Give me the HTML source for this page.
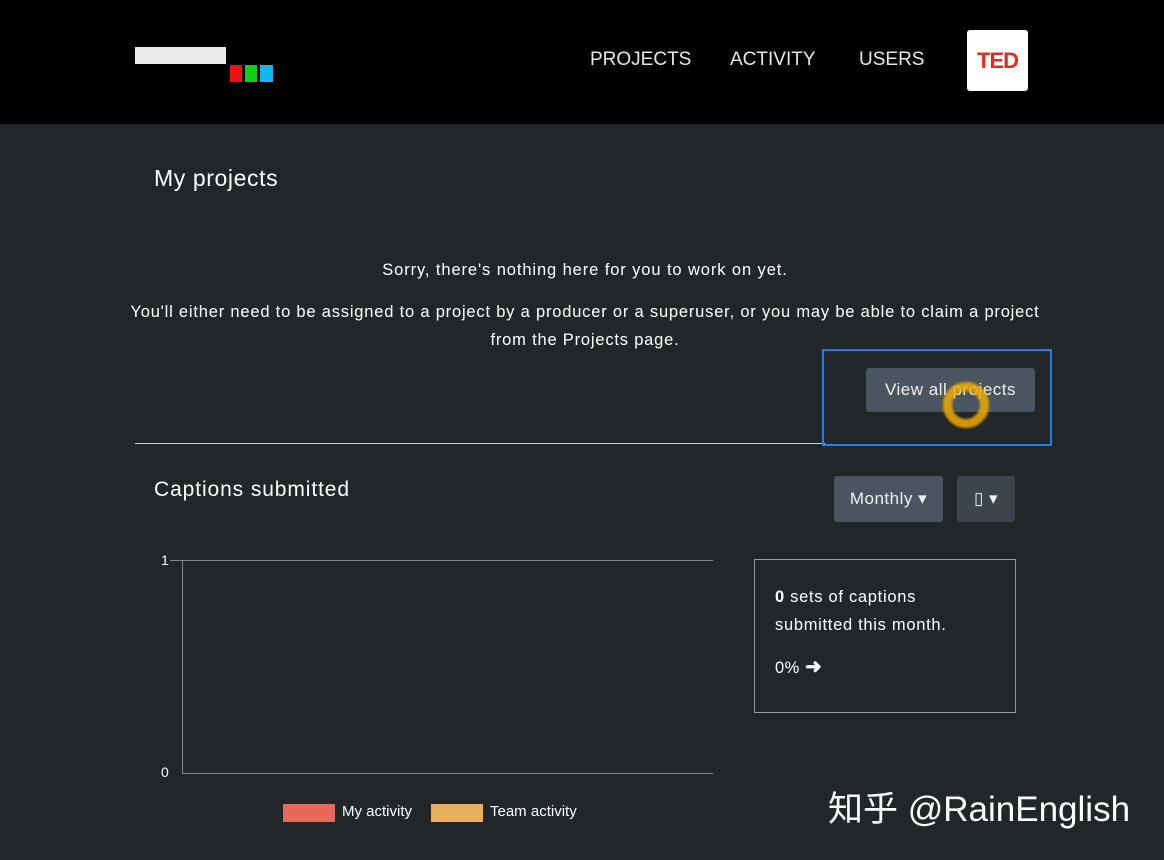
<!DOCTYPE html>
<html><head><style>
body{margin:0;width:1164px;height:860px;background:#212628;font-family:"Liberation Sans","Noto Sans CJK SC",sans-serif;color:#fff;position:relative;overflow:hidden}
.a{position:absolute}
.hdr{left:0;top:0;width:1164px;height:124px;background:#000}
.nav{font-size:19px;color:#e8e8e8;top:49px}
.btn{background:#4a5560;border-radius:3px;color:#f0f0f0;font-size:17px;letter-spacing:.5px}
</style></head><body>
<div class="a hdr"></div>
<div class="a" style="left:135px;top:47px;width:91px;height:17px;background:#ebebeb"></div>
<div class="a" style="left:230px;top:65px;width:12px;height:17px;background:#f01010"></div>
<div class="a" style="left:245px;top:65px;width:12px;height:17px;background:#10d010"></div>
<div class="a" style="left:260px;top:65px;width:13px;height:17px;background:#10b8f0"></div>
<div class="a nav" style="left:590px">PROJECTS</div>
<div class="a nav" style="left:730px">ACTIVITY</div>
<div class="a nav" style="left:859px">USERS</div>
<div class="a" style="left:967px;top:30px;width:61px;height:61px;background:#fff;border-radius:3px;color:#e62b1e;font-weight:bold;font-size:22px;line-height:61px;text-align:center;letter-spacing:-1px">TED</div>
<div class="a" style="left:154px;top:165px;font-size:23px;letter-spacing:.6px">My projects</div>
<div class="a" style="left:0;width:1164px;top:261px;text-align:center;font-size:16.5px;letter-spacing:.9px;padding-left:6px;box-sizing:border-box">Sorry, there's nothing here for you to work on yet.</div>
<div class="a" style="left:40px;width:1090px;top:298px;text-align:center;font-size:16.5px;letter-spacing:.8px;line-height:28px">You'll either need to be assigned to a project by a producer or a superuser, or you may be able to claim a project<br>from the Projects page.</div>
<div class="a" style="left:135px;top:443px;width:690px;height:1px;background:#ccc"></div>
<div class="a" style="left:822px;top:349px;width:226px;height:93px;border:2px solid #1a7ff0"></div>
<div class="a btn" style="left:866px;top:368px;width:169px;height:44px;line-height:44px;text-align:center">View all projects</div>
<div class="a" style="left:943px;top:382px;width:28px;height:28px;border:9px solid rgba(240,170,0,.85);border-radius:50%;filter:blur(1px)"></div>
<div class="a" style="left:154px;top:478px;font-size:21px;letter-spacing:.9px">Captions submitted</div>
<div class="a btn" style="left:834px;top:476px;width:109px;height:46px;line-height:46px;text-align:center">Monthly ▾</div>
<div class="a btn" style="left:957px;top:476px;width:58px;height:46px;line-height:46px;text-align:center;background:#3c454d">▯ ▾</div>
<div class="a" style="left:161px;top:552px;font-size:14px">1</div>
<div class="a" style="left:161px;top:764px;font-size:14px">0</div>
<div class="a" style="left:182px;top:560px;width:1px;height:213px;background:#888"></div>
<div class="a" style="left:170px;top:560px;width:543px;height:1px;background:#888"></div>
<div class="a" style="left:182px;top:773px;width:531px;height:1px;background:#888"></div>
<div class="a" style="left:283px;top:804px;width:52px;height:18px;background:#e8685a"></div>
<div class="a" style="left:342px;top:803px;font-size:15px">My activity</div>
<div class="a" style="left:431px;top:804px;width:52px;height:18px;background:#e8ae5e"></div>
<div class="a" style="left:490px;top:803px;font-size:15px">Team activity</div>
<div class="a" style="left:754px;top:559px;width:260px;height:152px;border:1px solid #999"></div>
<div class="a" style="left:775px;top:583px;font-size:16.5px;letter-spacing:.7px;line-height:28px"><b>0</b> sets of captions<br>submitted this month.</div>
<div class="a" style="left:775px;top:654px;font-size:16.5px;letter-spacing:.5px">0% <b style="font-size:20px">➜</b></div>
<div class="a" style="left:828px;top:781px;font-size:35px;color:#fff">知乎 @RainEnglish</div>
</body></html>
